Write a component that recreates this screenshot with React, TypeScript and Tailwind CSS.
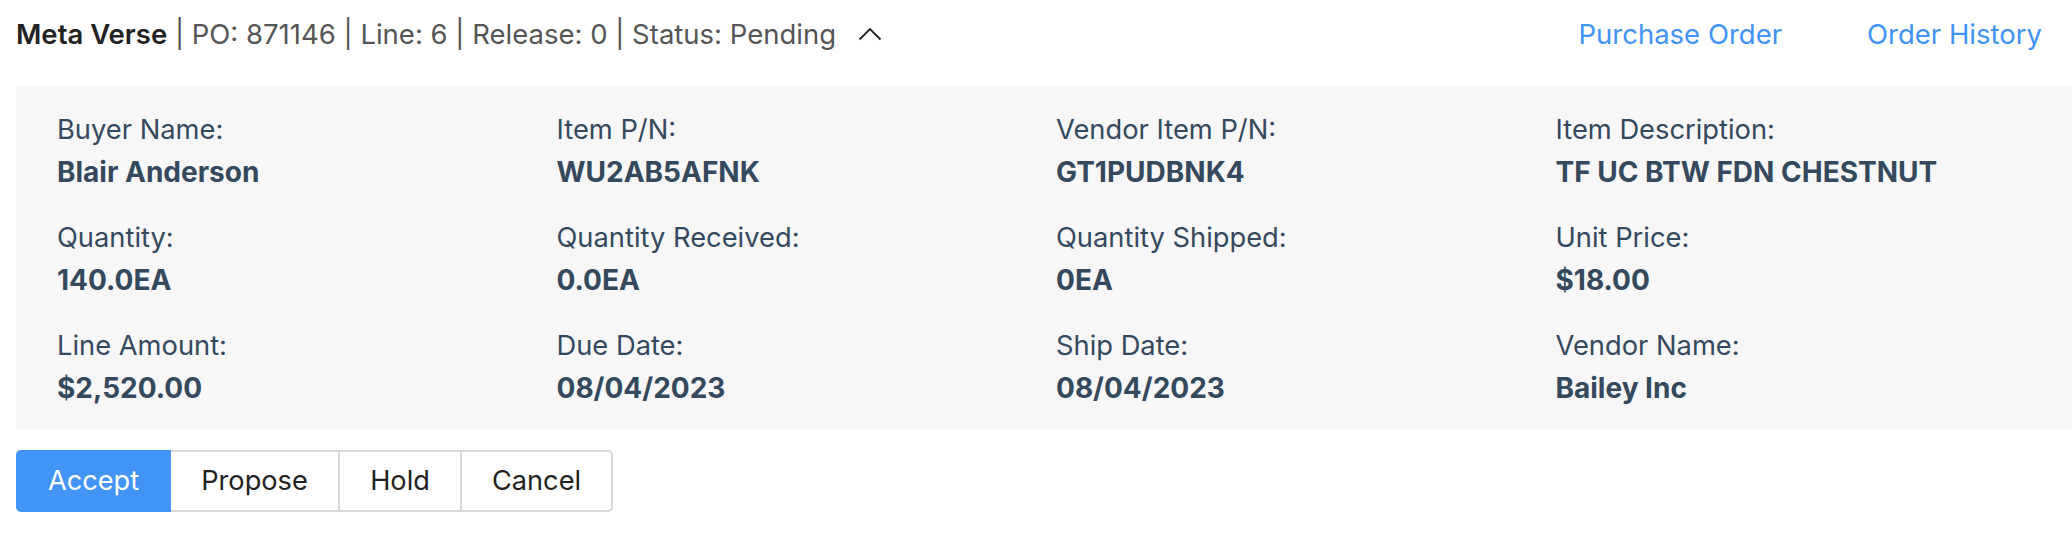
import React from 'react';

type Field = { label: string; value: string };

const fields: Field[] = [
  { label: 'Buyer Name:', value: 'Blair Anderson' },
  { label: 'Item P/N:', value: 'WU2AB5AFNK' },
  { label: 'Vendor Item P/N:', value: 'GT1PUDBNK4' },
  { label: 'Item Description:', value: 'TF UC BTW FDN CHESTNUT' },
  { label: 'Quantity:', value: '140.0EA' },
  { label: 'Quantity Received:', value: '0.0EA' },
  { label: 'Quantity Shipped:', value: '0EA' },
  { label: 'Unit Price:', value: '$18.00' },
  { label: 'Line Amount:', value: '$2,520.00' },
  { label: 'Due Date:', value: '08/04/2023' },
  { label: 'Ship Date:', value: '08/04/2023' },
  { label: 'Vendor Name:', value: 'Bailey Inc' },
];

const actions = [
  { name: 'Accept', width: 'w-[155px]' },
  { name: 'Propose', width: 'w-[169px]' },
  { name: 'Hold', width: 'w-[122px]' },
  { name: 'Cancel', width: 'w-[151px]' },
];

const App: React.FC = () => {
  return (
    <div className="w-full min-h-[554px] bg-white pl-4 font-['Inter',sans-serif]">
      <div className="flex items-center justify-between pt-4 mb-[34px] h-[52px]">
        <div className="flex items-center text-[27.5px] leading-[36px] text-[#555]">
          <span className="font-semibold text-[#222]">Meta Verse</span>
          <span>&nbsp;| PO: 871146 | Line: 6 | Release: 0 | Status: Pending</span>
          <svg className="ml-[22px] w-[24px] h-[14px]" viewBox="0 0 24 14" fill="none">
            <path d="M1.5 12.5 L12 2 L22.5 12.5" stroke="#222" strokeWidth="1.8" />
          </svg>
        </div>
        <div className="flex items-center gap-[85px] pr-[30px] text-[27.5px] leading-[36px] text-[#4193f6]">
          <button>Purchase Order</button>
          <button>Order History</button>
        </div>
      </div>

      <div className="grid grid-cols-4 gap-y-[31.5px] bg-[#f7f7f7] pl-[41px] pr-[17px] pt-[26.5px] pb-[23.5px] text-[#34495e]">
        {fields.map((f) => (
          <div key={f.label}>
            <div className="text-[27.3px] leading-[34px]">{f.label}</div>
            <div className="mt-[8.5px] text-[28px] leading-[34px] font-bold">{f.value}</div>
          </div>
        ))}
      </div>

      <div className="flex mt-[21.6px] h-[62px]">
        {actions.map((a, i) => (
          <button
            key={a.name}
            className={
              a.width +
              ' h-full text-[27.2px] ' +
              (i === 0
                ? 'bg-[#4294f7] text-white rounded-l-[5px] border-2 border-[#4294f7]'
                : 'bg-white text-[#222] border-2 border-l-0 border-[#d9d9d9]') +
              (i === actions.length - 1 ? ' rounded-r-[5px]' : '')
            }
          >
            {a.name}
          </button>
        ))}
      </div>
    </div>
  );
};

export default App;
